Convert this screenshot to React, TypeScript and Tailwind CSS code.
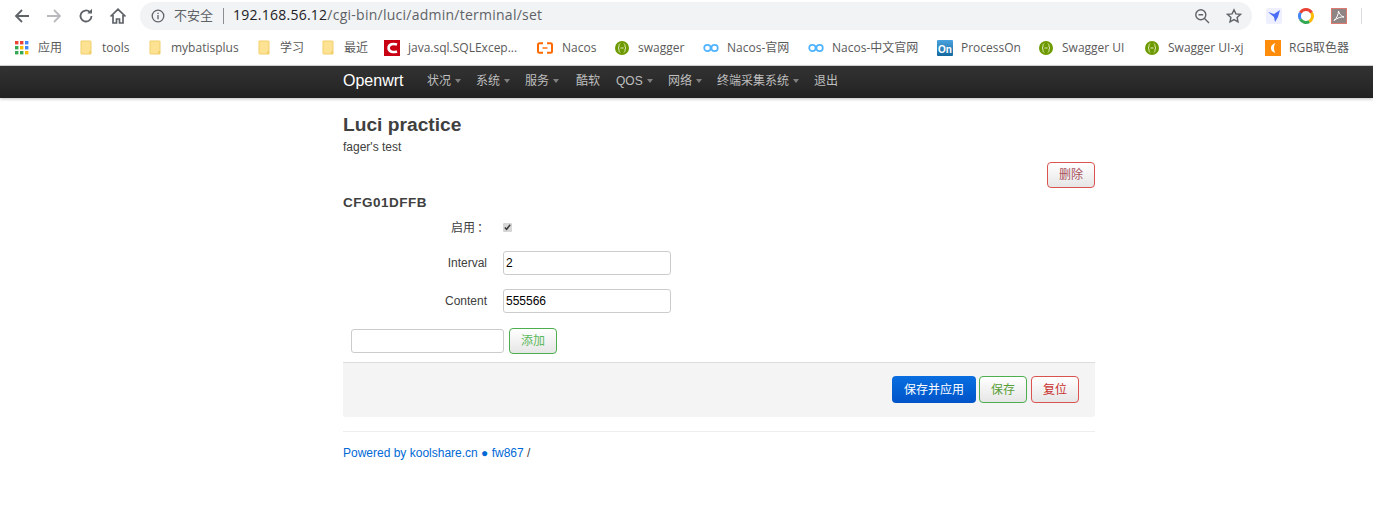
const BOOKMARKS = [
  { icon: "apps", label: "应用", width: "w-[65px]", col: "w-[23px]" },
  { icon: "folder", label: "tools", width: "w-[69px]", col: "w-[22px]" },
  { icon: "folder", label: "mybatisplus", width: "w-[109px]", col: "w-[22px]" },
  { icon: "folder", label: "学习", width: "w-[64px]", col: "w-[22px]" },
  { icon: "folder", label: "最近", width: "w-[62px]", col: "w-[22px]" },
  { icon: "csdn", label: "java.sql.SQLExcep...", width: "w-[153px]", col: "w-[24px]" },
  { icon: "ali", label: "Nacos", width: "w-[78px]", col: "w-[25px]" },
  { icon: "swagger", label: "swagger", width: "w-[88px]", col: "w-[23px]" },
  { icon: "nacos", label: "Nacos-官网", width: "w-[105px]", col: "w-[24px]" },
  { icon: "nacos", label: "Nacos-中文官网", width: "w-[129px]", col: "w-[24px]" },
  { icon: "on", label: "ProcessOn", width: "w-[102px]", col: "w-[24px]" },
  { icon: "swagger", label: "Swagger UI", width: "w-[106px]", col: "w-[23px]" },
  { icon: "swagger", label: "Swagger UI-xj", width: "w-[120px]", col: "w-[23px]" },
  { icon: "rgb", label: "RGB取色器", width: "w-[100px]", col: "w-[24px]" },
];

const NAV_ITEMS = [
  { label: "状况", caret: true, width: "w-[49px]" },
  { label: "系统", caret: true, width: "w-[49px]" },
  { label: "服务", caret: true, width: "w-[51px]" },
  { label: "酷软", caret: false, width: "w-[40px]" },
  { label: "QOS", caret: true, width: "w-[52px]" },
  { label: "网络", caret: true, width: "w-[49px]" },
  { label: "终端采集系统", caret: true, width: "w-[97px]" },
  { label: "退出", caret: false, width: "w-[30px]" },
];

function BookmarkIcon({ name }: { name: string }) {
  if (name === "apps") {
    const colors = ["#ea4335", "#ea4335", "#4285f4", "#34a853", "#fbbc05", "#4285f4", "#34a853", "#34a853", "#fbbc05"];
    return (
      <svg width="14" height="14" viewBox="0 0 14 14">
        {colors.map((c, i) => (
          <rect key={i} x={(i % 3) * 5} y={Math.floor(i / 3) * 5} width="3.4" height="3.4" fill={c} />
        ))}
      </svg>
    );
  }
  if (name === "folder") {
    return (
      <svg width="12" height="15" viewBox="0 0 12 15">
        <path d="M1 1h9.5a.5.5 0 0 1 .5.5V14H1.5a.5.5 0 0 1-.5-.5z" fill="#fde293" stroke="#f1cf6b" />
        <rect x="9" y="11" width="2" height="3" fill="#f1cf6b" />
      </svg>
    );
  }
  if (name === "csdn") {
    return (
      <svg width="16" height="16" viewBox="0 0 16 16">
        <rect width="16" height="16" fill="#c90013" />
        <path d="M13 4.6C9.5 3.4 4.6 4 4.6 8s4.9 4.6 8.4 3.4" fill="none" stroke="#fff" strokeWidth="2.6" />
      </svg>
    );
  }
  if (name === "ali") {
    return (
      <svg width="16" height="12" viewBox="0 0 16 12">
        <path d="M6 1.200H2.500A1.500 1.500 0 0 0 1 2.700v6.600a1.500 1.500 0 0 0 1.500 1.500H6M10 1.200h3.500A1.500 1.500 0 0 1 15 2.700v6.600a1.500 1.500 0 0 1-1.500 1.500H10" fill="none" stroke="#ff6a00" strokeWidth="2" />
        <rect x="5.500" y="5.300" width="5" height="1.400" fill="#ff6a00" />
      </svg>
    );
  }
  if (name === "swagger") {
    return (
      <svg width="14" height="14" viewBox="0 0 14 14">
        <circle cx="7" cy="7" r="7" fill="#6d9a00" />
        <path d="M5 2.500C3.500 3.200 4.500 6.200 3.200 7c1.300.8.300 3.800 1.800 4.500M9 2.500c1.500.7.500 3.700 1.800 4.500-1.300.8-.3 3.800-1.800 4.500" fill="none" stroke="#dfeab8" strokeWidth="1" />
        <rect x="5.400" y="6.500" width="3.200" height="1" fill="#dfeab8" />
      </svg>
    );
  }
  if (name === "nacos") {
    return (
      <svg width="16" height="10" viewBox="0 0 16 10">
        <circle cx="4.400" cy="5" r="3.200" fill="none" stroke="#4fb3ff" strokeWidth="1.700" />
        <circle cx="11.600" cy="5" r="3.200" fill="none" stroke="#4fb3ff" strokeWidth="1.700" />
      </svg>
    );
  }
  if (name === "on") {
    return (
      <div className="flex h-4 w-4 items-end justify-center rounded-[1px] bg-gradient-to-b from-[#4aa3df] to-[#11689f] font-['Liberation_Sans',sans-serif] text-[10px] leading-[13px] font-bold text-white">
        On
      </div>
    );
  }
  return (
    <svg width="16" height="16" viewBox="0 0 16 16">
      <rect width="16" height="16" fill="#ff8c0a" />
      <path d="M10.500 3C7 4 6 6 6 8s1 4 4.500 5C8.500 10.500 8.500 5.500 10.500 3z" fill="#fff" />
    </svg>
  );
}

function Caret() {
  return <span className="ml-1 inline-block h-0 w-0 border-x-[3.500px] border-t-[4px] border-x-transparent border-t-[#808080]" />;
}

function LuciButton({ label, className }: { label: string; className: string }) {
  return (
    <button className={`flex w-[48px] items-center justify-center rounded-[4px] border bg-gradient-to-b from-white to-[#e6e6e6] text-xs ${className}`}>
      {label}
    </button>
  );
}

export default function App() {
  return (
    <div className="h-[531px] w-[1373px] overflow-hidden bg-white font-['Liberation_Sans','Noto_Sans_CJK_SC',sans-serif] text-xs text-[#404040]">
      {/* Browser toolbar */}
      <div className="flex h-[31px] items-center">
        <div className="flex w-[140px] items-center text-[#5f6368]">
          <svg className="ml-[13px]" width="18" height="18" viewBox="0 0 18 18" fill="none" stroke="#5f6368" strokeWidth="1.800">
            <path d="M16 9H3M9 3 3 9l6 6" />
          </svg>
          <svg className="ml-[14px]" width="18" height="18" viewBox="0 0 18 18" fill="none" stroke="#b8babd" strokeWidth="1.800">
            <path d="M2 9h13M9 3l6 6-6 6" />
          </svg>
          <svg className="ml-[14px]" width="18" height="18" viewBox="0 0 18 18" fill="none" stroke="#5f6368" strokeWidth="1.800">
            <path d="M14.500 9a5.500 5.500 0 1 1-1.700-4" />
            <path d="M15 1.800V6.500h-4.700z" fill="#5f6368" stroke="none" />
          </svg>
          <svg className="ml-[14px]" width="18" height="18" viewBox="0 0 18 18" fill="none" stroke="#5f6368" strokeWidth="1.700">
            <path d="M1.500 9.500 9 2.300l7.500 7.200M4 8v8h3.500v-4h3v4H14V8" />
          </svg>
        </div>
        <div className="flex h-[28px] w-[1112px] items-center rounded-full bg-[#f1f3f4] font-['Open_Sans','Noto_Sans_CJK_SC',sans-serif]">
          <svg className="ml-[11px]" width="14" height="14" viewBox="0 0 14 14" fill="none" stroke="#5f6368" strokeWidth="1.300">
            <circle cx="7" cy="7" r="5.800" />
            <path d="M7 6v4.200M7 3.800v1.300" />
          </svg>
          <span className="ml-[9px] text-[13px] text-[#5f6368]">不安全</span>
          <span className="mr-[9px] ml-[10px] h-[16px] w-px bg-[#8a8d91]" />
          <span className="text-[14px] tracking-[0.25px] text-[#5f6368]">
            <span className="text-[#202124]">192.168.56.12</span>/cgi-bin/luci/admin/terminal/set
          </span>
          <svg className="ml-auto" width="16" height="16" viewBox="0 0 16 16" fill="none" stroke="#5f6368" strokeWidth="1.400">
            <circle cx="6.800" cy="6.800" r="5" />
            <path d="M4.500 6.800h4.600M10.500 10.500 15 15" />
          </svg>
          <svg className="mr-[10px] ml-[16px]" width="16" height="16" viewBox="0 0 16 16" fill="none" stroke="#5f6368" strokeWidth="1.400">
            <path d="m8 1.800 1.900 4.100 4.500.5-3.300 3 .9 4.400L8 11.600l-4 2.200.9-4.400-3.300-3 4.500-.5z" />
          </svg>
        </div>
        <div className="flex flex-1 items-center">
          <svg className="ml-[14px]" width="16" height="16" viewBox="0 0 16 16">
            <rect width="16" height="16" rx="2" fill="#eef0ff" />
            <path d="M2 4l6 2 6-4-2 7-3 5-1-5z" fill="#4a6cf7" />
          </svg>
          <svg className="ml-[16px]" width="16" height="16" viewBox="0 0 16 16" fill="none" strokeWidth="3">
            <path d="M8 1.500a6.500 6.500 0 0 1 5.600 3.200" stroke="#ea4335" />
            <path d="M2.400 4.700A6.500 6.500 0 0 1 8 1.500" stroke="#ea4335" />
            <path d="M13.600 4.700a6.500 6.500 0 0 1-2.400 8.900" stroke="#fbbc05" />
            <path d="M11.200 13.600a6.500 6.500 0 0 1-8.800-2.400" stroke="#34a853" />
            <path d="M2.400 11.200a6.500 6.500 0 0 1 0-6.500" stroke="#4285f4" />
          </svg>
          <svg className="ml-[17px]" width="16" height="16" viewBox="0 0 16 16">
            <rect x=".5" y=".5" width="15" height="15" fill="#8f8585" stroke="#dc7a70" />
            <path d="M3 12.500C6 10 7.500 6 7.500 3c1 3 2 5 5.500 6-3-.2-6 .5-10 3.500z" fill="none" stroke="#fff" />
          </svg>
          <span className="ml-[14px] h-[16px] w-px bg-[#dadce0]" />
        </div>
      </div>

      {/* Bookmarks bar */}
      <div className="flex h-[35px] items-center border-b border-[#d8d8d8] pb-px pl-[15px] font-['Open_Sans','Noto_Sans_CJK_SC',sans-serif] text-[12px] text-[#5a5a5a]">
        {BOOKMARKS.map((b) => (
          <div key={b.label} className={`flex shrink-0 items-center ${b.width}`}>
            <div className={`flex shrink-0 items-center ${b.col}`}>
              <BookmarkIcon name={b.icon} />
            </div>
            <span className="whitespace-nowrap">{b.label}</span>
          </div>
        ))}
      </div>

      {/* Navbar */}
      <div className="h-[32px] bg-gradient-to-b from-[#333333] to-[#222222] shadow-[0_1px_3px_rgba(0,0,0,0.25)]">
        <div className="ml-[343px] flex h-full w-[752px] items-center pb-[2px]">
          <span className="w-[84px] text-[16px] text-white">Openwrt</span>
          {NAV_ITEMS.map((n) => (
            <div key={n.label} className={`flex items-center text-xs text-[#bfbfbf] ${n.width}`}>
              {n.label}
              {n.caret && <Caret />}
            </div>
          ))}
        </div>
      </div>

      {/* Page body */}
      <div className="ml-[343px] w-[752px]">
        <h2 className="mt-[15px] text-[19.200px] leading-[24px] font-bold">Luci practice</h2>
        <p className="mt-[3px] text-xs leading-[15px]">fager's test</p>

        <div className="mt-[7px] flex justify-end">
          <LuciButton label="删除" className="h-[26px] border-[#d9534f] text-[#a8505a]" />
        </div>

        <h3 className="mt-[7px] text-[13.500px] leading-[16px] font-bold tracking-[0.5px]">CFG01DFFB</h3>

        <div className="mt-[8px] flex h-[18px] items-center">
          <label className="w-[144px] text-right">
            启用<span className="-mr-[2px] ml-[2px]">：</span>
          </label>
          <input type="checkbox" readOnly checked className="mb-[2px] ml-[16px] h-[9px] w-[9px] accent-[#d8d8d8]" />
        </div>

        <div className="mt-[14px] flex h-[24px] items-center">
          <label className="w-[144px] text-right">Interval</label>
          <input readOnly value="2" className="ml-[16px] h-[24px] w-[168px] rounded-[3px] border border-[#ccc] px-[2px] text-xs text-black" />
        </div>

        <div className="mt-[14px] flex h-[24px] items-center">
          <label className="w-[144px] text-right">Content</label>
          <input readOnly value="555566" className="ml-[16px] h-[24px] w-[168px] rounded-[3px] border border-[#ccc] px-[2px] text-xs text-black" />
        </div>

        <div className="mt-[15px] ml-[8px] flex h-[26px] items-center">
          <input readOnly className="h-[24px] w-[153px] rounded-[3px] border border-[#ccc]" />
          <div className="ml-[5px]">
            <LuciButton label="添加" className="h-[26px] border-[#4cae4c] text-[#5cb85c]" />
          </div>
        </div>

        {/* Actions */}
        <div className="mt-[8px] flex h-[55px] items-start justify-end gap-[3px] rounded-b-[3px] border-t border-[#ddd] bg-[#f4f4f4] pt-[13px] pr-[16px]">
          <button className="flex h-[27px] w-[84px] items-center justify-center rounded-[4px] bg-gradient-to-b from-[#0a6ee0] to-[#0054c8] text-xs text-white">
            保存并应用
          </button>
          <LuciButton label="保存" className="h-[27px] border-[#4cae4c] text-[#5a9e3a]" />
          <div className="ml-[1px]">
            <LuciButton label="复位" className="h-[27px] border-[#d9534f] text-[#c9302c]" />
          </div>
        </div>

        <div className="mt-[14px] border-t border-[#eee] pt-[14px] leading-[15px]">
          <span className="text-[#0069d6]">Powered by koolshare.cn ● fw867</span> /
        </div>
      </div>
    </div>
  );
}
